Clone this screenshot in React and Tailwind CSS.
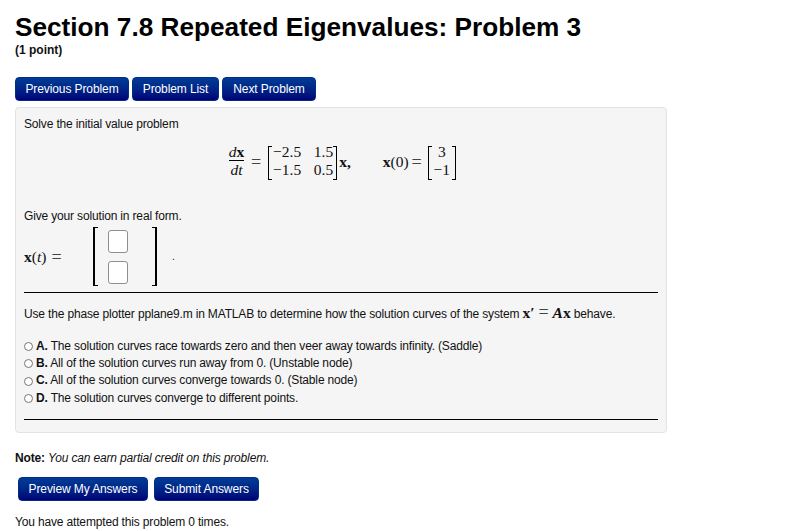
const NavButton = ({ children, className = '' }) => (
  <button
    type="button"
    className={`h-[24px] rounded-[4px] border border-[#002f7f] bg-gradient-to-b from-[#003c96] to-[#000078] text-[12px] tracking-[-0.1px] text-white ${className}`}
  >
    {children}
  </button>
);

const Bracket = ({ side, className = '' }) => (
  <span
    className={`block w-[4px] border-y border-black ${side === 'left' ? 'border-l' : 'border-r'} ${className}`}
  ></span>
);

const Equals = ({ className = '' }) => (
  <span className={`text-[18px] leading-none text-[#444] ${className}`}>=</span>
);

const Matrix = ({ rows, cellClass }) => (
  <span className="flex h-[34px] items-stretch">
    <Bracket side="left" />
    <span className="-mt-[2px] flex flex-col gap-[2px]">
      {rows.map((row, i) => (
        <span key={i} className="flex h-[16px] items-center">
          {row.map((cell, j) => (
            <span key={j} className={`text-right ${cellClass}`}>{cell}</span>
          ))}
        </span>
      ))}
    </span>
    <Bracket side="right" />
  </span>
);

const Choice = ({ letter, text }) => (
  <label className="flex h-[17.3px] items-center">
    <span className="mr-[3px] mt-[2px] block h-[9px] w-[9px] rounded-full border border-[#767676] bg-white"></span>
    <span><b>{letter}.</b> {text}</span>
  </label>
);

const AnswerBox = () => (
  <input type="text" className="block h-[23px] w-[20px] rounded-[3px] border border-[#8f8f8f] bg-white" />
);

export default function App() {
  return (
    <div className="h-[531px] w-[785px] overflow-hidden bg-white pl-[15px] font-['Liberation_Sans',Arial,sans-serif] text-[12px] tracking-[-0.16px] text-[#111]">
      <h1 className="pt-[12px] text-[26.2px] font-bold leading-[30px] tracking-normal text-black">
        Section 7.8 Repeated Eigenvalues: Problem 3
      </h1>
      <p className="mt-[1px] font-bold leading-[14px] tracking-normal">(1 point)</p>

      <div className="mt-[20px] flex gap-[3px]">
        <NavButton className="w-[114px]">Previous Problem</NavButton>
        <NavButton className="w-[87px]">Problem List</NavButton>
        <NavButton className="w-[94px]">Next Problem</NavButton>
      </div>

      <div className="mt-[6px] h-[326px] w-[652px] rounded-[4px] border border-[#e3e3e3] bg-[#f5f5f5] px-[8px]">
        <p className="pt-[9px] leading-[15px]">Solve the initial value problem</p>

        <div className="mt-[14px] flex h-[34px] items-center pl-[203px] font-['Liberation_Serif',serif] text-[15.5px] tracking-normal">
          <span className="-mt-[4px] flex w-[19px] flex-col items-center leading-[14px]">
            <span className="border-b border-black pb-[1px]"><i>d</i><b>x</b></span>
            <span className="pt-[2px]"><i>dt</i></span>
          </span>
          <Equals className="-mt-[2px] ml-[5px] mr-[7px]" />
          <Matrix rows={[['−2.5', '1.5'], ['−1.5', '0.5']]} cellClass="first:w-[29px] last:w-[32px]" />
          <b className="-mt-[3px] ml-[2px]">x,</b>
          <span className="-mt-[3px] ml-[32px]"><b>x</b>(0)</span>
          <Equals className="-mt-[2px] ml-[3px] mr-[6px]" />
          <Matrix rows={[['3'], ['−1']]} cellClass="w-[20px] !text-center" />
        </div>

        <p className="mt-[29px] leading-[15px]">Give your solution in real form.</p>

        <div className="mt-[3px] flex h-[59px] items-center">
          <span className="flex w-[69px] items-center gap-[5px] font-['Liberation_Serif',serif] text-[15.5px] tracking-normal">
            <span><b>x</b>(<i>t</i>)</span> <Equals />
          </span>
          <span className="flex h-[59px] items-stretch">
            <Bracket side="left" className="w-[5px] border-l-2" />
            <span className="ml-[10px] mr-[24px] flex flex-col justify-center gap-[8px]">
              <AnswerBox />
              <AnswerBox />
            </span>
            <Bracket side="right" className="w-[5px] border-r-2" />
          </span>
          <span className="ml-[15px] text-[10px] leading-none">.</span>
        </div>

        <hr className="mt-[6px] border-t border-black" />

        <p className="mt-[10px] h-[15px] whitespace-pre leading-[15px]">
          Use the phase plotter pplane9.m in MATLAB to determine how the solution curves of the system{' '}
          <span className="font-['Liberation_Serif',serif] text-[15.5px] leading-none tracking-normal">
            <b>x′</b> <span className="text-[18px] leading-none text-[#444]">=</span> <b><i>A</i>x</b>
          </span>{' '}
          behave.
        </p>

        <div className="mt-[19px] flex flex-col">
          <Choice letter="A" text="The solution curves race towards zero and then veer away towards infinity. (Saddle)" />
          <Choice letter="B" text="All of the solution curves run away from 0. (Unstable node)" />
          <Choice letter="C" text="All of the solution curves converge towards 0. (Stable node)" />
          <Choice letter="D" text="The solution curves converge to different points." />
        </div>

        <hr className="mt-[13px] border-t border-black" />
      </div>

      <p className="mt-[18px] leading-[15px]">
        <b>Note:</b> <i>You can earn partial credit on this problem.</i>
      </p>

      <div className="ml-[3px] mt-[11px] flex gap-[6px]">
        <NavButton className="w-[130px]">Preview My Answers</NavButton>
        <NavButton className="w-[105px]">Submit Answers</NavButton>
      </div>

      <p className="mt-[14px] leading-[15px]">You have attempted this problem 0 times.</p>
    </div>
  );
}
